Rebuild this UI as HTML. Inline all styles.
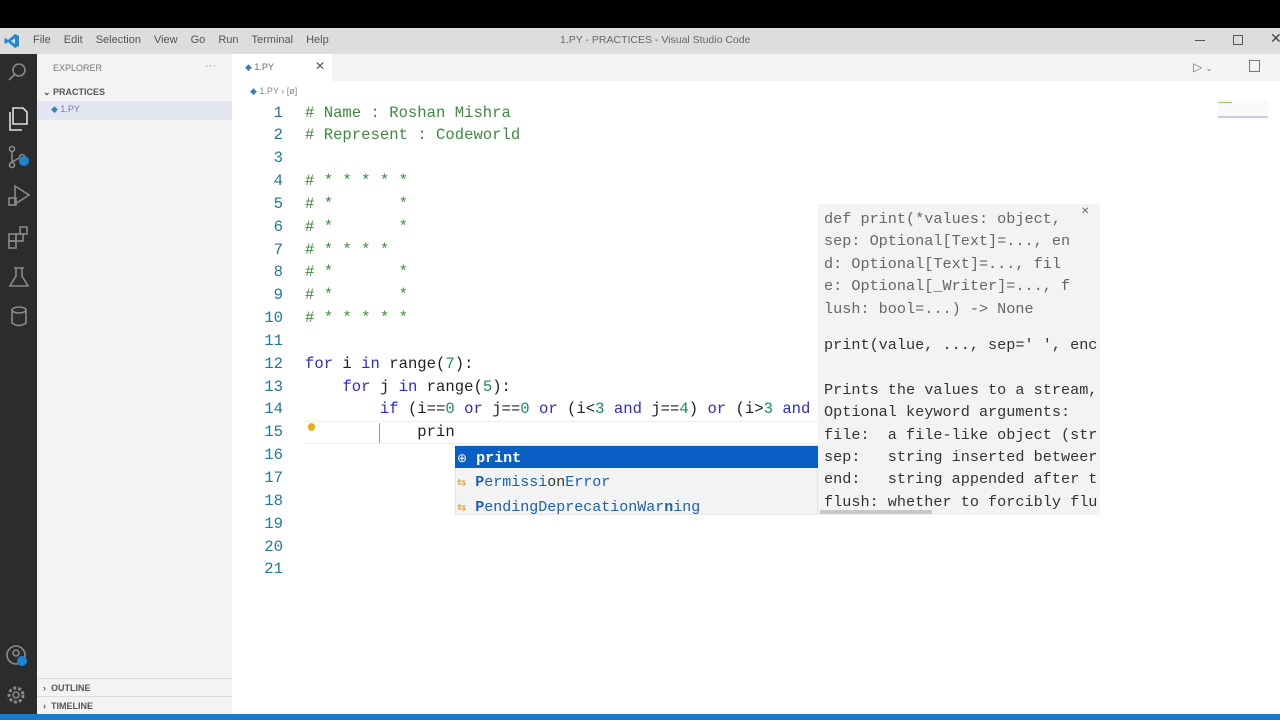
<!DOCTYPE html>
<html><head><meta charset="utf-8"><style>
*{margin:0;padding:0;box-sizing:border-box}
body{width:1280px;height:720px;overflow:hidden;background:#fff;position:relative;font-family:"Liberation Sans",sans-serif}
.abs{position:absolute}
.mono{font-family:"Liberation Mono",monospace}
.code{position:absolute;left:305px;font-size:15.6px;white-space:pre;line-height:22.85px;color:#222}
.ln{position:absolute;left:250px;width:33px;text-align:right;font-size:15.6px;line-height:22.85px;color:#237893;white-space:pre}
.c{color:#3d8a3d}.k{color:#2a2ad8}.p{color:#7a3db8}.n{color:#1d8a5c}.f{color:#6b5a1a}
.doc{position:absolute;left:824px;font-size:15.2px;line-height:22.4px;white-space:pre;color:#444}
.menu span{margin-right:13px}
</style></head><body>
<div class="abs" style="left:0;top:0;width:1280px;height:28px;background:#000"></div>
<div class="abs" style="left:0;top:28px;width:1280px;height:26px;background:#dddddd"></div>
<svg class="abs" style="left:4px;top:33px" width="16" height="16" viewBox="0 0 16 16"><path d="M11 1 L15 3 V13 L11 15 L4 9 L1.5 11 L0.5 10 V6 L1.5 5 L4 7 L11 1 Z M11 5 L7 8 L11 11 Z" fill="#1f8ad2"/></svg>
<div class="abs menu" style="left:33px;top:34px;font-size:11px;color:#555;white-space:nowrap"><span>File</span><span>Edit</span><span>Selection</span><span>View</span><span>Go</span><span>Run</span><span>Terminal</span><span>Help</span></div>
<div class="abs" style="left:560px;top:34px;font-size:10.5px;color:#666">1.PY - PRACTICES - Visual Studio Code</div>
<div class="abs" style="left:1195px;top:40px;width:10px;height:1px;background:#555"></div>
<div class="abs" style="left:1233px;top:35px;width:10px;height:10px;border:1.5px solid #555"></div>
<div class="abs" style="left:1270px;top:30px;font-size:14px;color:#444">✕</div>
<!-- activity bar -->
<div class="abs" style="left:0;top:54px;width:37px;height:660px;background:#2c2c2c"></div>
<svg class="abs" style="left:5px;top:58px" width="28" height="280" viewBox="0 0 28 280" fill="none" stroke="#8a8a8a" stroke-width="1.6">
<circle cx="14" cy="12" r="6"/><path d="M10 16 L4 22"/>
<path d="M8 50 H18 L22 54 V66 H8 Z M5 54 V72 H17" stroke="#ddd"/>
<circle cx="7" cy="91" r="2.5"/><circle cx="7" cy="107" r="2.5"/><circle cx="17" cy="99" r="2.5"/><path d="M7 94 V104 M7 104 Q14 100 15 100"/>
<circle cx="19" cy="103" r="5" fill="#1a85d6" stroke="none"/>
<path d="M10 128 L24 137 L10 146 Z"/><rect x="4" y="140" width="7" height="7"/>
<rect x="4" y="176" width="7" height="7"/><rect x="11" y="176" width="7" height="7"/><rect x="4" y="183" width="7" height="7"/><rect x="15" y="169" width="7" height="7"/>
<path d="M11 210 V218 L5 228 H23 L17 218 V210 M9 210 H19"/>
<ellipse cx="14" cy="252" rx="7" ry="3"/><path d="M7 252 V265 Q14 270 21 265 V252"/>
</svg>
<svg class="abs" style="left:4px;top:643px" width="30" height="64" viewBox="0 0 30 64" fill="none" stroke="#8a8a8a" stroke-width="1.6">
<circle cx="12" cy="12" r="9"/><circle cx="12" cy="10" r="3"/><circle cx="18" cy="18" r="5" fill="#1a85d6" stroke="none"/>
<circle cx="12" cy="52" r="3"/><circle cx="12" cy="52" r="7" stroke-dasharray="3 2" stroke-width="3"/>
</svg>
<!-- sidebar -->
<div class="abs" style="left:37px;top:54px;width:195px;height:660px;background:#f3f3f3"></div>
<div class="abs" style="left:53px;top:63px;font-size:9px;color:#777">EXPLORER</div>
<div class="abs" style="left:205px;top:60px;font-size:11px;color:#888">···</div>
<div class="abs" style="left:43px;top:87px;font-size:9px;color:#555;font-weight:bold">⌄ PRACTICES</div>
<div class="abs" style="left:37px;top:101px;width:195px;height:19px;background:#e4e6f1"></div>
<div class="abs" style="left:51px;top:104px;font-size:9px;color:#7a7aaa"><span style="color:#3b7fb6">◆</span> 1.PY</div>
<div class="abs" style="left:37px;top:678px;width:195px;height:1px;background:#ddd"></div>
<div class="abs" style="left:43px;top:683px;font-size:9px;color:#555;font-weight:bold">›&nbsp; OUTLINE</div>
<div class="abs" style="left:37px;top:696px;width:195px;height:1px;background:#ddd"></div>
<div class="abs" style="left:43px;top:701px;font-size:9px;color:#555;font-weight:bold">›&nbsp; TIMELINE</div>
<!-- tabs -->
<div class="abs" style="left:232px;top:54px;width:1048px;height:27px;background:#f3f3f3"></div>
<div class="abs" style="left:232px;top:54px;width:100px;height:27px;background:#fff"></div>
<div class="abs" style="left:245px;top:62px;font-size:9px;color:#666"><span style="color:#3b7fb6">◆</span> 1.PY</div>
<div class="abs" style="left:315px;top:59px;font-size:12px;color:#555">✕</div>
<div class="abs" style="left:1193px;top:60px;font-size:12px;color:#777">▷ <span style="font-size:8px">⌄</span></div>
<div class="abs" style="left:1249px;top:60px;width:11px;height:12px;border:1.5px solid #777"></div>
<div class="abs" style="left:250px;top:86px;font-size:9px;color:#888"><span style="color:#3b7fb6">◆</span> 1.PY › [ø] </div>
<div class="abs" style="left:1218px;top:100px;width:50px;height:20px;background:#fafafa"></div>
<div class="abs" style="left:1218px;top:102px;width:14px;height:1px;background:#9c6"></div>
<div class="abs" style="left:1218px;top:116px;width:50px;height:2px;background:#ccd"></div>
<!-- code -->
<div class="ln mono" style="top:101.5px">1
2
3
4
5
6
7
8
9
10
11
12
13
14
15
16
17
18
19
20
21</div>
<div class="abs" style="left:305px;top:421px;width:905px;height:23px;border-top:1px solid #eee;border-bottom:1px solid #eee"></div>
<div class="code mono" style="top:101.5px"><span class="c"># Name : Roshan Mishra
# Represent : Codeworld</span>

<span class="c"># * * * * *
# *       *
# *       *
# * * * *
# *       *
# *       *
# * * * * *</span>

<span class="k">for</span> i <span class="k">in</span> range(<span class="n">7</span>):
    <span class="k">for</span> j <span class="k">in</span> range(<span class="n">5</span>):
        <span class="k">if</span> (i==<span class="n">0</span> <span class="k">or</span> j==<span class="n">0</span> <span class="k">or</span> (i&lt;<span class="n">3</span> <span class="k">and</span> j==<span class="n">4</span>) <span class="k">or</span> (i&gt;<span class="n">3</span> <span class="k">and</span>
            prin</div>
<div class="abs" style="left:379px;top:423px;width:1px;height:20px;background:#999"></div>
<div class="abs" style="left:308px;top:423px;width:7px;height:8px;border-radius:50%;background:#e8b010"></div>
<!-- suggest -->
<div class="abs" style="left:455px;top:445px;width:363px;height:70px;background:#f3f3f3;border:1px solid #e4e4e4"></div>
<div class="abs" style="left:455px;top:446px;width:363px;height:22px;background:#0a5fc4"></div>
<div class="abs mono" style="left:457px;top:447px;font-size:15px;line-height:23px;white-space:pre;color:#1a5fb4"><span style="color:#fff;font-size:12px">⊕</span> <b style="color:#fff">print</b>
<span style="color:#d9a040;font-size:11px">⇆</span> <b>P</b>ermissi<span style="color:#333">on</span>Error
<span style="color:#d9a040;font-size:11px">⇆</span> <b>P</b>endingDeprecationWar<b>n</b>ing</div>
<!-- docs -->
<div class="abs" style="left:818px;top:204px;width:282px;height:311px;background:#f3f3f3"></div>
<div class="doc mono" style="top:208px;color:#666">def print(*values: object,
sep: Optional[Text]=..., en
d: Optional[Text]=..., fil
e: Optional[_Writer]=..., f
lush: bool=...) -&gt; None</div>
<div class="abs" style="left:1081px;top:206px;font-size:10px;color:#666">✕</div>
<div class="doc mono" style="top:334px;color:#333">print(value, ..., sep=' ', enc

Prints the values to a stream,
Optional keyword arguments:
file:  a file-like object (str
sep:   string inserted betweer
end:   string appended after t
flush: whether to forcibly flu</div>
<div class="abs" style="left:820px;top:510px;width:112px;height:4px;background:#c8c8c8"></div>
<div class="abs" style="left:1100px;top:204px;width:180px;height:511px;background:#fff"></div>
<!-- status -->
<div class="abs" style="left:0;top:714px;width:1280px;height:6px;background:#1a7acb"></div>
</body></html>
